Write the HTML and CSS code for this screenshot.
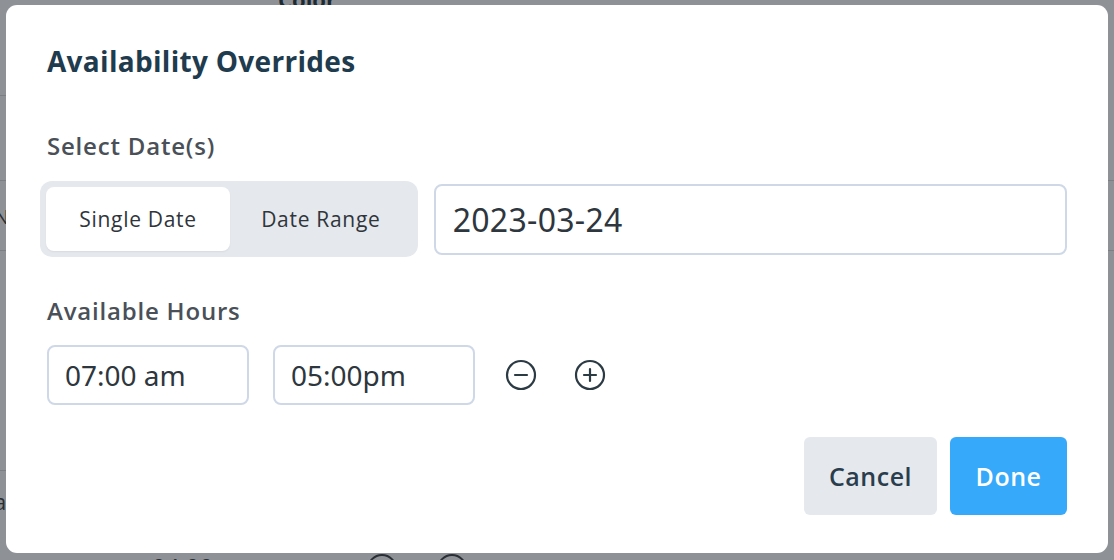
FILE: index.html
```html
<!DOCTYPE html>
<html>
<head>
<meta charset="utf-8">
<link rel="stylesheet" href="styles.css">
</head>
<body>
<div class="backdrop">
  <div class="bg-page">
    <div class="bg-color">Color</div>
    <div class="bg-line l1"></div>
    <div class="bg-line l2"></div>
    <div class="bg-line l3"></div>
    <div class="bg-line l4"></div>
    <div class="bg-n">N</div>
    <div class="bg-a">a</div>
    <div class="bg-time">04:00</div>
    <div class="bg-circ c1"></div>
    <div class="bg-circ c2"></div>
  </div>
  <div class="modal">
    <h1 class="title">Availability Overrides</h1>
    <div class="label">Select Date(s)</div>
    <div class="date-row">
      <div class="segmented">
        <div class="seg active">Single Date</div>
        <div class="seg">Date Range</div>
      </div>
      <div class="input date-input">2023-03-24</div>
    </div>
    <div class="label hours-label">Available Hours</div>
    <div class="hours-row">
      <div class="input time-input">07:00 am</div>
      <div class="input time-input">05:00pm</div>
      <svg class="icon" width="34" height="34" viewBox="0 0 34 34"><circle cx="17" cy="17" r="14" fill="none" stroke="#2c3a44" stroke-width="2.2"/><path d="M11 17h12" stroke="#2c3a44" stroke-width="2.2" stroke-linecap="round"/></svg>
      <svg class="icon" width="34" height="34" viewBox="0 0 34 34"><circle cx="17" cy="17" r="14" fill="none" stroke="#2c3a44" stroke-width="2.2"/><path d="M11 17h12M17 11v12" stroke="#2c3a44" stroke-width="2.2" stroke-linecap="round"/></svg>
    </div>
    <div class="actions">
      <button class="btn cancel">Cancel</button>
      <button class="btn done">Done</button>
    </div>
  </div>
</div>
</body>
</html>
```

FILE: styles.css
```css
html, body {
  margin: 0;
  padding: 0;
  width: 1114px;
  height: 560px;
  overflow: hidden;
}
.backdrop {
  position: relative;
  width: 1114px;
  height: 560px;
  background: #8e9297;
  padding: 5px 6px 0 6px;
  box-sizing: border-box;
  font-family: "Open Sans", "Noto Sans", sans-serif;
}
.bg-page {
  position: absolute;
  inset: 0;
}
.bg-color {
  position: absolute;
  left: 278px;
  top: -16px;
  font-size: 22px;
  font-weight: 700;
  color: #1d2a33;
}
.bg-line {
  position: absolute;
  height: 1px;
  background: #7c8085;
}
.l1 { left: 0; width: 6px; top: 95px; }
.l2 { left: 0; width: 1114px; top: 180px; }
.l3 { left: 0; width: 1114px; top: 250px; }
.l4 { left: 0; width: 6px; top: 470px; }
.bg-n { position: absolute; left: -6px; top: 203px; font-size: 20px; color: #2a2f35; }
.bg-a { position: absolute; left: -6px; top: 486px; font-size: 22px; color: #2a2f35; }
.bg-time { position: absolute; left: 152px; top: 550px; font-size: 24px; color: #2a2f35; }
.bg-circ {
  position: absolute;
  top: 554px;
  width: 26px;
  height: 26px;
  border: 2px solid #2a2f35;
  border-radius: 50%;
}
.c1 { left: 367px; }
.c2 { left: 437px; }

.modal {
  position: relative;
  width: 1102px;
  height: 548px;
  background: #fff;
  border-radius: 11px;
  box-sizing: border-box;
  padding: 38px 41px 0 41px;
}
.title {
  margin: 0;
  font-size: 28px;
  line-height: 36px;
  font-weight: 700;
  color: #1f3b4e;
  letter-spacing: 0.3px;
}
.label {
  margin-top: 53px;
  font-size: 24px;
  line-height: 28px;
  font-weight: 600;
  color: #4a5058;
  letter-spacing: 0.8px;
}
.date-row {
  display: flex;
  align-items: center;
  gap: 16px;
  margin-top: 21px;
  margin-left: -7px;
}
.segmented {
  display: flex;
  background: #e5e8ec;
  border-radius: 12px;
  padding: 6px;
  width: 378px;
  height: 76px;
  box-sizing: border-box;
}
.seg {
  flex: 0 0 184px;
  display: flex;
  align-items: center;
  justify-content: center;
  font-size: 21px;
  letter-spacing: 0.7px;
  color: #2f353b;
  border-radius: 8px;
}
.seg.active {
  background: #fff;
  box-shadow: 0 1px 2px rgba(0,0,0,0.06);
}
.seg + .seg {
  flex: 1;
}
.input {
  box-sizing: border-box;
  border: 2px solid #cfd8e6;
  border-radius: 8px;
  display: flex;
  align-items: center;
  font-family: "Noto Sans", "Open Sans", sans-serif;
  color: #2e363e;
}
.date-input {
  width: 634px;
  height: 71px;
  padding-left: 17px;
  font-size: 32px;
  letter-spacing: 0.3px;
}
.hours-label {
  margin-top: 40px;
}
.hours-row {
  display: flex;
  align-items: center;
  margin-top: 20px;
}
.time-input {
  width: 202px;
  height: 60px;
  padding-left: 16px;
  font-size: 28px;
  margin-right: 24px;
}
.time-input + .time-input {
  margin-right: 29px;
}
.icon + .icon {
  margin-left: 35px;
}
.actions {
  display: flex;
  justify-content: flex-end;
  gap: 13px;
  margin-top: 32px;
}
.btn {
  border: none;
  border-radius: 6px;
  height: 78px;
  font-family: "Open Sans", "Noto Sans", sans-serif;
  font-size: 25px;
  letter-spacing: 0.5px;
  font-weight: 600;
  cursor: pointer;
}
.cancel {
  width: 133px;
  background: #e5e8ec;
  color: #2a3d4d;
}
.done {
  width: 117px;
  background: #36a9fb;
  color: #fff;
}
```
